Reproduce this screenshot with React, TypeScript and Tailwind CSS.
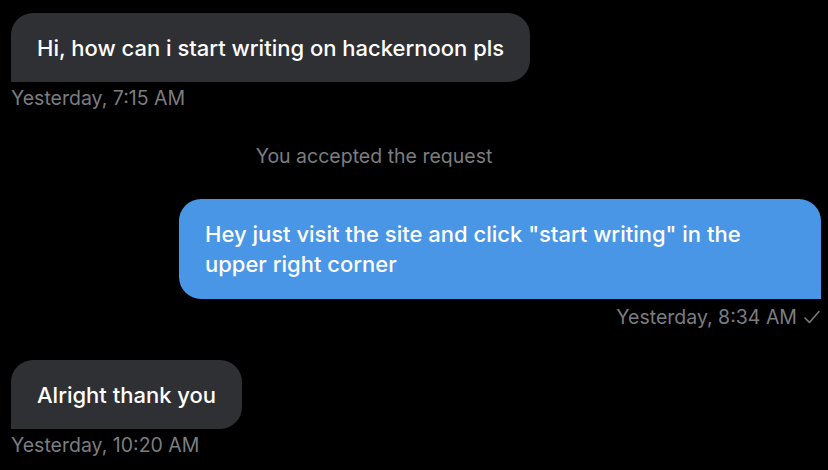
import React from "react";

const ts = "text-[19.5px] leading-[22px] text-[#7c7d80]";

export default function App() {
  return (
    <div
      className="w-[828px] h-[470px] bg-black overflow-hidden flex flex-col pl-[11px] pr-[7px] pt-[13px]"
      style={{ fontFamily: "Inter, 'Noto Sans', sans-serif" }}
    >
      <div className="self-start bg-[#2f3033] text-white text-[22px] font-medium leading-[30px] rounded-[22px] rounded-bl-none px-[26px] py-[19.5px]">
        Hi, how can i start writing on hackernoon pls
      </div>
      <div className={`${ts} mt-[5px]`}>Yesterday, 7:15 AM</div>

      <div className={`${ts} self-center mt-[36px] ml-[-84px]`}>You accepted the request</div>

      <div className="self-end w-[642px] bg-[#4a96e6] text-white text-[22px] font-medium leading-[30px] rounded-[22px] rounded-br-none pl-[26px] pr-[50px] py-[20px] mt-[32px]">
        Hey just visit the site and click "start writing" in the upper right corner
      </div>
      <div className={`${ts} self-end mt-[7px] flex items-center gap-[5px] mr-[-1px]`}>
        <span>Yesterday, 8:34 AM</span>
        <svg width="20" height="20" viewBox="0 0 20 20" fill="none">
          <path d="M3 11 L7.5 15.5 L17 4.5" stroke="#7c7d80" strokeWidth="1.5" strokeLinecap="round" strokeLinejoin="round" />
        </svg>
      </div>

      <div className="self-start bg-[#2f3033] text-white text-[22px] font-medium leading-[30px] rounded-[22px] rounded-bl-none px-[26px] py-[19.5px] mt-[32px]">
        Alright thank you
      </div>
      <div className={`${ts} mt-[5px]`}>Yesterday, 10:20 AM</div>
    </div>
  );
}
